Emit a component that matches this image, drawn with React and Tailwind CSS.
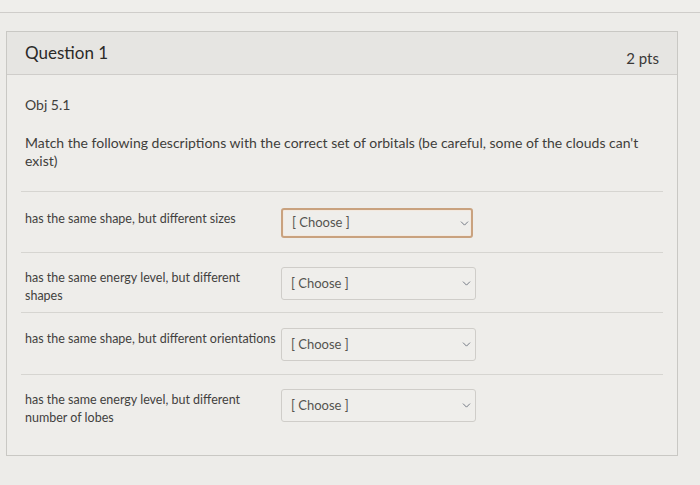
import { ChevronDown } from 'lucide-react';

const ROWS = [
  { lines: ['has the same shape, but different sizes'], focused: true, h: 'h-[61px]', top: 'pt-[16px]' },
  { lines: ['has the same energy level, but different', 'shapes'], h: 'h-[60px]', top: 'pt-[14px]' },
  { lines: ['has the same shape, but different orientations'], h: 'h-[62px]', top: 'pt-[15px]' },
  { lines: ['has the same energy level, but different', 'number of lobes'], h: 'h-[80px]', top: 'pt-[14px]' },
];

const ChooseSelect = ({ focused }) => (
  <div
    className={`flex shrink-0 items-center justify-between rounded-[3px] bg-[#efeeeb] pl-[9px] ${
      focused
        ? 'h-[30px] w-[192px] border-2 border-[#c9a27f] pr-[0px] shadow-[inset_0_0_0_1px_#f3e9df]'
        : 'h-[33px] w-[195px] border border-[#cfcdc9] pr-[2px]'
    }`}
  >
    <span className="text-[13px] text-[#555450]">[ Choose ]</span>
    <ChevronDown size={13} strokeWidth={1.7} className="text-[#6a707c]" aria-hidden />
  </div>
);

const MatchRow = ({ lines, focused, last, h, top }) => (
  <div className={`flex items-start ${h} ${top} ${last ? '' : 'border-b border-[#d6d5d1]'}`}>
    <div className="w-[260px] shrink-0 pl-[4px] pt-[2px] text-[12.5px] leading-[17.5px] text-[#42413e]">
      {lines.map((line) => (
        <div key={line}>{line}</div>
      ))}
    </div>
    <ChooseSelect focused={focused} />
  </div>
);

export default function App() {
  return (
    <div
      className="h-[485px] w-[700px] overflow-hidden bg-[#edece9]"
      style={{ fontFamily: 'Lato, "Open Sans", sans-serif' }}
    >
      <div className="h-[13px] border-b border-[#cfcdca] bg-[#efeeeb]" />

      <div className="mx-[6px] mt-[18px] w-[672px] border border-[#c9c8c4] bg-[#eeedea]">
        <div className="flex h-[43px] items-center justify-between border-b border-[#cfcdca] bg-[#e6e5e2] px-[18px]">
          <span className="text-[17px] text-[#2b2a28]">Question 1</span>
          <span className="mt-[10px] text-[15px] text-[#3a3937]">2 pts</span>
        </div>

        <div className="px-[14px]">
          <div className="pl-[4px] pt-[21px] text-[14px] leading-[18px] text-[#3f3e3b]">
            <p>Obj 5.1</p>
            <p className="mt-[20px]">
              Match the following descriptions with the correct set of orbitals (be careful, some of the clouds can't
              <br />
              exist)
            </p>
          </div>

          <div className="mt-[21px] border-t border-[#d6d5d1]">
            {ROWS.map((row, i) => (
              <MatchRow key={i} {...row} last={i === ROWS.length - 1} />
            ))}
          </div>
        </div>
      </div>
    </div>
  );
}
